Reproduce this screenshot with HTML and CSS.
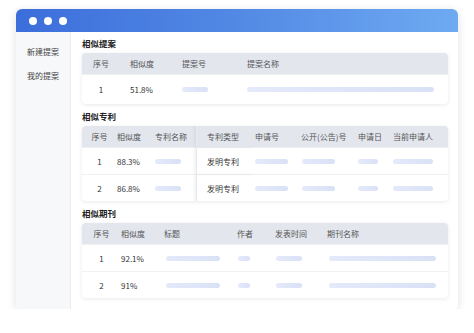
FILE: index.html
```html
<!DOCTYPE html>
<html lang="zh-CN">
<head>
    <meta charset="UTF-8">
    <title>相似提案</title>
    <link rel="stylesheet" href="styles.css">
</head>
<body>
    <div class="window">
        <div class="titlebar">
            <span class="dot"></span>
            <span class="dot"></span>
            <span class="dot"></span>
        </div>
        <div class="body">
            <div class="sidebar">
                <div class="nav">新建提案</div>
                <div class="nav">我的提案</div>
            </div>
            <div class="main">
                <div class="section">
                    <div class="title">相似提案</div>
                    <div class="table t1">
                        <div class="row head">
                            <div class="c0">序号</div>
                            <div>相似度</div>
                            <div>提案号</div>
                            <div>提案名称</div>
                        </div>
                        <div class="row">
                            <div class="c0">1</div>
                            <div>51.8%</div>
                            <div><span class="bar w26"></span></div>
                            <div><span class="bar w187"></span></div>
                        </div>
                    </div>
                </div>

                <div class="section">
                    <div class="title">相似专利</div>
                    <div class="table t2">
                        <div class="row head">
                            <div class="c0">序号</div>
                            <div>相似度</div>
                            <div>专利名称</div>
                            <div class="split">专利类型</div>
                            <div>申请号</div>
                            <div>公开(公告)号</div>
                            <div>申请日</div>
                            <div>当前申请人</div>
                        </div>
                        <div class="row">
                            <div class="c0">1</div>
                            <div>88.3%</div>
                            <div><span class="bar w26"></span></div>
                            <div class="split">发明专利</div>
                            <div><span class="bar w33"></span></div>
                            <div><span class="bar w33 ml1"></span></div>
                            <div><span class="bar w20"></span></div>
                            <div><span class="bar w40"></span></div>
                        </div>
                        <div class="row">
                            <div class="c0">2</div>
                            <div>86.8%</div>
                            <div><span class="bar w26"></span></div>
                            <div class="split">发明专利</div>
                            <div><span class="bar w33"></span></div>
                            <div><span class="bar w33 ml1"></span></div>
                            <div><span class="bar w20"></span></div>
                            <div><span class="bar w40"></span></div>
                        </div>
                    </div>
                </div>

                <div class="section">
                    <div class="title">相似期刊</div>
                    <div class="table t3">
                        <div class="row head">
                            <div class="c0">序号</div>
                            <div>相似度</div>
                            <div>标题</div>
                            <div>作者</div>
                            <div>发表时间</div>
                            <div>期刊名称</div>
                        </div>
                        <div class="row">
                            <div class="c0">1</div>
                            <div>92.1%</div>
                            <div><span class="bar w54 ml2"></span></div>
                            <div><span class="bar w12 ml1"></span></div>
                            <div><span class="bar w26 ml1"></span></div>
                            <div><span class="bar w107 ml2"></span></div>
                        </div>
                        <div class="row">
                            <div class="c0">2</div>
                            <div>91%</div>
                            <div><span class="bar w54 ml2"></span></div>
                            <div><span class="bar w12 ml1"></span></div>
                            <div><span class="bar w26 ml1"></span></div>
                            <div><span class="bar w107 ml2"></span></div>
                        </div>
                    </div>
                </div>
            </div>
        </div>
    </div>
</body>
</html>
```

FILE: styles.css
```css
body {
    font-family: "Noto Sans CJK SC", "Noto Sans", sans-serif;
    background-color: #fff;
    margin: 0;
    padding: 9px 0 0 16px;
    font-size: 8px;
    color: #333;
}
.window {
    width: 442px;
    height: 300px;
    background-color: #fff;
    border-radius: 6px 6px 4px 4px;
    box-shadow: 0 2px 10px rgba(0, 0, 0, 0.12);
    display: flex;
    flex-direction: column;
    overflow: hidden;
}
.titlebar {
    height: 23px;
    flex: none;
    display: flex;
    align-items: center;
    gap: 7px;
    padding-left: 13px;
    background: linear-gradient(90deg, #3c6edb, #5289e4 50%, #6eaaf2);
}
.dot {
    width: 8px;
    height: 8px;
    border-radius: 50%;
    background-color: #fff;
}
.body {
    flex: 1;
    display: flex;
}
.sidebar {
    width: 54px;
    flex: none;
    background-color: #f7f8fa;
    border-right: 1px solid #e9ebef;
    padding-top: 14px;
    box-sizing: border-box;
    width: 55px;
}
.nav {
    line-height: 12px;
    margin-bottom: 12px;
    padding-left: 11px;
    color: #444;
}
.main {
    flex: 1;
    padding: 5px 10px 0 11px;
}
.section {
    margin-bottom: 6px;
}
.title {
    font-weight: bold;
    line-height: 12px;
    margin-bottom: 4px;
    color: #222;
    font-size: 8.5px;
}
.table {
    background-color: #fff;
    border-radius: 4px;
    box-shadow: 0 1px 4px rgba(0, 0, 0, 0.09);
    overflow: hidden;
}
.row {
    display: grid;
    align-items: center;
    height: 27px;
    border-top: 1px solid #eef0f3;
    box-sizing: border-box;
}
.row.head {
    height: 21px;
    border-top: none;
    background-color: #e3e6ed;
    color: #555;
}
.row > div {
    white-space: nowrap;
    height: 100%;
    display: flex;
    align-items: center;
}
.row > .c0 {
    justify-content: center;
}
.t1 .row {
    grid-template-columns: 48px 52px 65px 1fr;
}
.t1 .row:not(.head) {
    height: 30px;
}
.t1 .c0 {
    padding-right: 10px;
}
.t2 .row {
    grid-template-columns: 35px 38px 41px 59px 46px 57px 35px 1fr;
}
.t2 .split {
    padding-left: 10px;
    border-left: 1px solid #e6e8ec;
    box-shadow: -2px 0 3px rgba(0, 0, 0, 0.05);
}
.t3 .row {
    grid-template-columns: 39px 43px 73px 38px 52px 1fr;
}
.bar {
    display: block;
    height: 5px;
    border-radius: 3px;
    background: linear-gradient(90deg, #e4eafa, #d9e1f6);
}
.w12 { width: 12px; }
.w20 { width: 20px; }
.w26 { width: 26px; }
.w33 { width: 33px; }
.w40 { width: 40px; }
.w54 { width: 54px; }
.w107 { width: 107px; }
.w187 { width: 187px; }
.ml1 { margin-left: 1px; }
.ml2 { margin-left: 2px; }
```
